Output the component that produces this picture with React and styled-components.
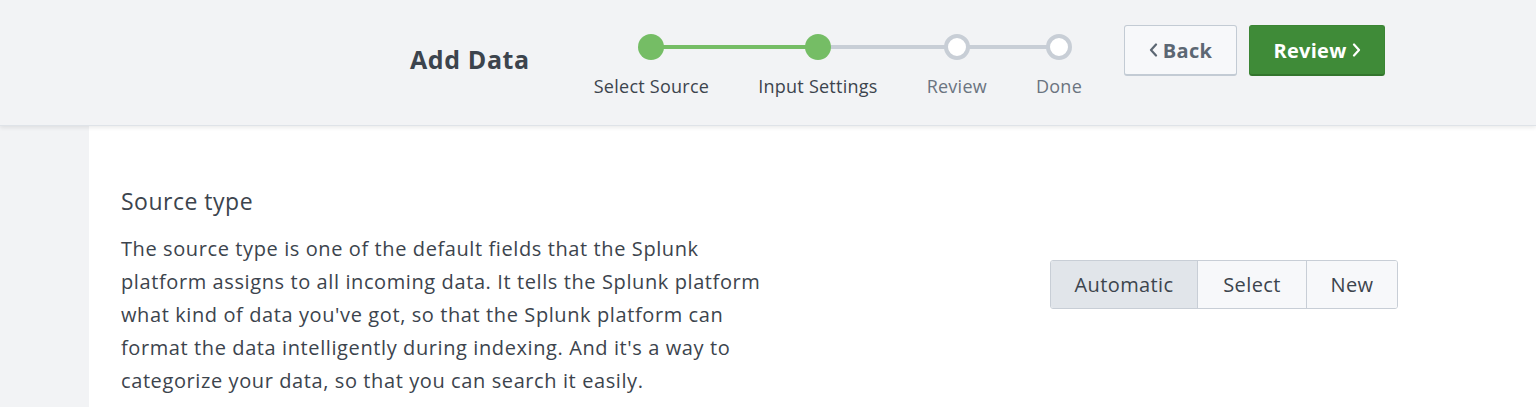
import React from 'react';
import styled, { createGlobalStyle } from 'styled-components';

const Global = createGlobalStyle`
  body {
    margin: 0;
    background: #f2f3f5;
    font-family: "Open Sans", "Noto Sans", sans-serif;
    color: #3c444d;
  }
`;

const Page = styled.div`
  height: 407px;
  overflow: hidden;
  background: #f2f3f5;
`;

const Header = styled.header`
  height: 125px;
  display: flex;
  align-items: flex-start;
  padding-left: 410px;
  box-sizing: border-box;
  background: #f2f3f5;
  box-shadow: 0 1px 0 #dfe3e8, 0 3px 4px rgba(0, 0, 0, 0.08);
  position: relative;
  z-index: 1;
`;

const Title = styled.h1`
  margin: 43px 64px 0 0;
  font-size: 25px;
  font-weight: 700;
  letter-spacing: 0.6px;
  line-height: 32px;
  color: #3c444d;
`;

const Steps = styled.ol`
  display: flex;
  gap: 49px;
  list-style: none;
  margin: 34px 42px 0 0;
  padding: 0;
`;

const Step = styled.li`
  position: relative;
  display: flex;
  flex-direction: column;
  align-items: center;

  &::before, &::after {
    content: '';
    position: absolute;
    top: 11px;
    height: 4px;
  }
  &::before {
    left: -25px;
    right: 50%;
    background: ${p => (p.$first ? 'transparent' : p.$done ? '#75bd65' : '#c8ced6')};
  }
  &::after {
    left: 50%;
    right: -25px;
    background: ${p => (p.$last ? 'transparent' : p.$nextDone ? '#75bd65' : '#c8ced6')};
  }
`;

const Dot = styled.span`
  position: relative;
  z-index: 1;
  width: 26px;
  height: 26px;
  box-sizing: border-box;
  border-radius: 50%;
  background: ${p => (p.$done ? '#75bd65' : '#fff')};
  border: ${p => (p.$done ? 'none' : '4px solid #c8ced6')};
`;

const StepLabel = styled.span`
  margin-top: 15px;
  font-size: 18px;
  line-height: 22px;
  letter-spacing: 0.25px;
  white-space: nowrap;
  color: ${p => (p.$done ? '#3c444d' : '#6b7480')};
`;

const Actions = styled.div`
  display: flex;
  gap: 12px;
  margin-top: 25px;
`;

const Button = styled.button`
  display: inline-flex;
  align-items: center;
  justify-content: center;
  gap: 5px;
  height: 51px;
  padding: 0;
  width: ${p => p.$width}px;
  box-sizing: border-box;
  border-radius: 3px;
  font-family: inherit;
  font-size: 20px;
  font-weight: 700;
  letter-spacing: 0.3px;
  cursor: pointer;
  border: 1px solid ${p => (p.$primary ? '#3b8534' : '#c3cbd4')};
  border-bottom: 2px solid ${p => (p.$primary ? '#33752d' : '#c3cbd4')};
  background: ${p => (p.$primary ? '#3f8b38' : '#f7f8fa')};
  color: ${p => (p.$primary ? '#fff' : '#5c6773')};
`;

const Body = styled.div`
  display: flex;
  height: 282px;
`;

const Gutter = styled.div`
  width: 89px;
  flex: none;
  background: #f2f3f5;
`;

const Panel = styled.main`
  flex: 1;
  background: #fff;
  padding: 63px 138px 0 32px;
  display: flex;
  align-items: flex-start;
`;

const Field = styled.section`
  flex: 1;
`;

const FieldTitle = styled.h2`
  margin: 0 0 17px;
  font-size: 23px;
  font-weight: 400;
  letter-spacing: 0.5px;
  line-height: 27px;
  color: #3c444d;
`;

const Help = styled.p`
  margin: 0;
  font-size: 20px;
  line-height: 33px;
  letter-spacing: 0.6px;
  color: #3c444d;
  white-space: nowrap;
`;

const Segmented = styled.div`
  display: flex;
  margin-top: 72px;
  border: 1px solid #c8ced6;
  border-radius: 3px;
  overflow: hidden;
`;

const Segment = styled.button`
  height: 47px;
  width: ${p => p.$width}px;
  padding: 0;
  border: none;
  border-left: ${p => (p.$first ? 'none' : '1px solid #c8ced6')};
  background: ${p => (p.$active ? '#e1e5ea' : '#f7f8fa')};
  font-family: inherit;
  font-size: 20px;
  letter-spacing: 0.4px;
  color: #3c444d;
  cursor: pointer;
`;

const Chevron = ({ dir }) => (
  <svg width="9" height="14" viewBox="0 0 9 14" fill="none">
    <path
      d={dir === 'left' ? 'M7 1.5 L2 7 L7 12.5' : 'M2 1.5 L7 7 L2 12.5'}
      stroke="currentColor"
      strokeWidth="2.2"
      strokeLinecap="round"
      strokeLinejoin="round"
    />
  </svg>
);

const steps = [
  { label: 'Select Source', done: true },
  { label: 'Input Settings', done: true },
  { label: 'Review', done: false },
  { label: 'Done', done: false },
];

const modes = [
  { label: 'Automatic', width: 146, active: true },
  { label: 'Select', width: 109 },
  { label: 'New', width: 91 },
];

export default function App() {
  return (
    <Page>
      <Global />
      <Header>
        <Title>Add Data</Title>
        <Steps>
          {steps.map((s, i) => (
            <Step
              key={s.label}
              $first={i === 0}
              $last={i === steps.length - 1}
              $done={s.done}
              $nextDone={steps[i + 1] && steps[i + 1].done}
            >
              <Dot $done={s.done} />
              <StepLabel $done={s.done}>{s.label}</StepLabel>
            </Step>
          ))}
        </Steps>
        <Actions>
          <Button $width={113}>
            <Chevron dir="left" />
            Back
          </Button>
          <Button $width={136} $primary>
            Review
            <Chevron dir="right" />
          </Button>
        </Actions>
      </Header>
      <Body>
        <Gutter />
        <Panel>
          <Field>
            <FieldTitle>Source type</FieldTitle>
            <Help>
              The source type is one of the default fields that the Splunk<br />
              platform assigns to all incoming data. It tells the Splunk platform<br />
              what kind of data you've got, so that the Splunk platform can<br />
              format the data intelligently during indexing. And it's a way to<br />
              categorize your data, so that you can search it easily.
            </Help>
          </Field>
          <Segmented>
            {modes.map((m, i) => (
              <Segment key={m.label} $width={m.width} $active={m.active} $first={i === 0}>
                {m.label}
              </Segment>
            ))}
          </Segmented>
        </Panel>
      </Body>
    </Page>
  );
}
